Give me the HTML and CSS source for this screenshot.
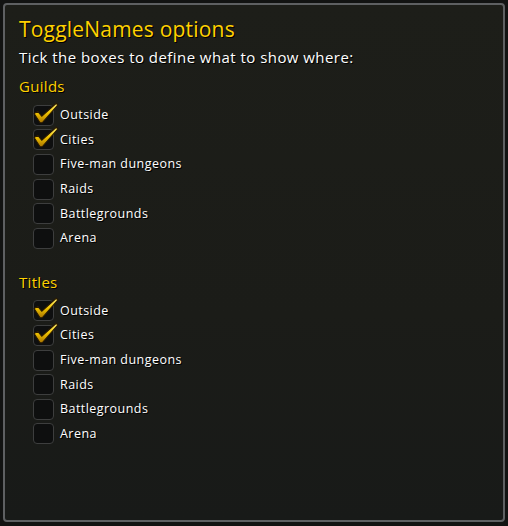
FILE: index.html
```html
<!DOCTYPE html>
<html>
<head>
<meta charset="utf-8">
<link rel="stylesheet" href="styles.css">
</head>
<body>
<svg width="0" height="0" class="defs">
  <defs>
    <linearGradient id="gold" x1="0" y1="0" x2="0" y2="1">
      <stop offset="0" stop-color="#fff27a"/>
      <stop offset="0.5" stop-color="#f2c500"/>
      <stop offset="1" stop-color="#a87400"/>
    </linearGradient>
    <symbol id="check" viewBox="0 0 24 20">
      <path d="M1 10.5 L4.5 8.5 L8 13 L21.5 1 L23 2.5 L8.5 19 L6.5 19 Z" fill="url(#gold)" stroke="#2a1a00" stroke-width="1" stroke-linejoin="round"/>
    </symbol>
  </defs>
</svg>
<div class="panel">
  <h1 class="title">ToggleNames options</h1>
  <p class="subtitle">Tick the boxes to define what to show where:</p>

  <h2 class="section">Guilds</h2>
  <ul class="options">
    <li class="option"><span class="box checked"><svg class="tick"><use href="#check"/></svg></span><span class="label">Outside</span></li>
    <li class="option"><span class="box checked"><svg class="tick"><use href="#check"/></svg></span><span class="label">Cities</span></li>
    <li class="option"><span class="box"></span><span class="label">Five-man dungeons</span></li>
    <li class="option"><span class="box"></span><span class="label">Raids</span></li>
    <li class="option"><span class="box"></span><span class="label">Battlegrounds</span></li>
    <li class="option"><span class="box"></span><span class="label">Arena</span></li>
  </ul>

  <h2 class="section second">Titles</h2>
  <ul class="options">
    <li class="option"><span class="box checked"><svg class="tick"><use href="#check"/></svg></span><span class="label">Outside</span></li>
    <li class="option"><span class="box checked"><svg class="tick"><use href="#check"/></svg></span><span class="label">Cities</span></li>
    <li class="option"><span class="box"></span><span class="label">Five-man dungeons</span></li>
    <li class="option"><span class="box"></span><span class="label">Raids</span></li>
    <li class="option"><span class="box"></span><span class="label">Battlegrounds</span></li>
    <li class="option"><span class="box"></span><span class="label">Arena</span></li>
  </ul>
</div>
</body>
</html>
```
FILE: styles.css
```css
html, body {
  margin: 0;
  padding: 0;
  background: #121312;
  width: 508px;
  height: 526px;
  overflow: hidden;
}
.defs {
  position: absolute;
  width: 0;
  height: 0;
}
.panel {
  margin: 3px;
  width: 502px;
  height: 519px;
  box-sizing: border-box;
  border: 2px solid #5e6062;
  border-radius: 4px;
  background: linear-gradient(180deg, #1d1e19 0%, #1b1c18 60%, #181a18 100%);
  padding: 11px 0 0 14px;
  font-family: "Open Sans", "DejaVu Sans", sans-serif;
  text-shadow: 1px 1px 0 #000;
}
.title {
  margin: 0;
  font-size: 21px;
  font-weight: 400;
  line-height: 26px;
  color: #ffd100;
  letter-spacing: 0.2px;
}
.subtitle {
  margin: 5px 0 0;
  font-size: 15px;
  line-height: 20px;
  color: #ffffff;
  letter-spacing: 0.45px;
}
.section {
  margin: 9px 0 0;
  font-size: 15px;
  font-weight: 400;
  line-height: 20px;
  color: #ffd100;
  letter-spacing: 0.3px;
}
.section.second {
  margin-top: 21px;
}
.options {
  list-style: none;
  margin: 7px 0 0;
  padding: 0 0 0 14px;
}
.option {
  display: flex;
  align-items: center;
  height: 24.6px;
}
.box {
  position: relative;
  width: 21px;
  height: 21px;
  box-sizing: border-box;
  border: 1.5px solid #3d3e3e;
  border-radius: 4px;
  background: #0e0f0f;
  flex: none;
}
.tick {
  position: absolute;
  left: -1px;
  top: -4px;
  width: 26px;
  height: 22px;
}
.label {
  margin-left: 6px;
  font-size: 12.5px;
  line-height: 16px;
  color: #ffffff;
  letter-spacing: 0.45px;
}
```
